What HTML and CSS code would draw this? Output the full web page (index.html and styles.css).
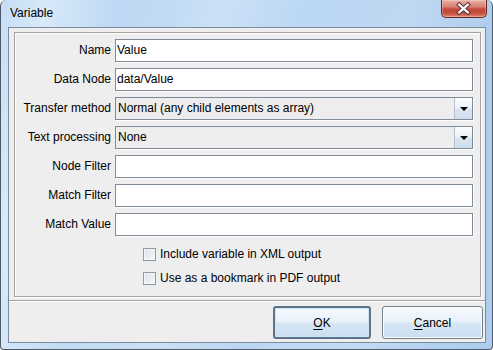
FILE: index.html
```html
<!DOCTYPE html>
<html>
<head>
<meta charset="utf-8">
<link rel="stylesheet" href="styles.css">
</head>
<body>
<div class="window">
  <div class="titlebar">
    <span class="title">Variable</span>
    <div class="close">
      <svg width="46" height="18" viewBox="0 0 46 18">
        <path d="M18.5 4.5 L27.5 12.5 M27.5 4.5 L18.5 12.5" stroke="#5a2a24" stroke-width="4.2" stroke-linecap="square" fill="none"/>
        <path d="M18.5 4.5 L27.5 12.5 M27.5 4.5 L18.5 12.5" stroke="#ffffff" stroke-width="2.2" stroke-linecap="square" fill="none"/>
      </svg>
    </div>
  </div>
  <div class="client">
    <div class="panel">
      <div class="form">
        <span class="lbl">Name</span><div class="field">Value</div>
        <span class="lbl">Data Node</span><div class="field">data/Value</div>
        <span class="lbl">Transfer method</span>
        <div class="combo"><span class="combo-text">Normal (any child elements as array)</span><span class="combo-btn"><svg width="8" height="4" viewBox="0 0 8 4"><path d="M0 0 H8 L4 4 Z" fill="#000"/></svg></span></div>
        <span class="lbl">Text processing</span>
        <div class="combo"><span class="combo-text">None</span><span class="combo-btn"><svg width="8" height="4" viewBox="0 0 8 4"><path d="M0 0 H8 L4 4 Z" fill="#000"/></svg></span></div>
        <span class="lbl">Node Filter</span><div class="field"></div>
        <span class="lbl">Match Filter</span><div class="field"></div>
        <span class="lbl">Match Value</span><div class="field"></div>
      </div>
      <div class="checks">
        <div class="check"><span class="box"></span><span class="ctext">Include variable in XML output</span></div>
        <div class="check"><span class="box"></span><span class="ctext">Use as a bookmark in PDF output</span></div>
      </div>
    </div>
    <div class="buttons">
      <div class="btn btn-ok"><span><u>O</u>K</span></div>
      <div class="btn btn-cancel"><span><u>C</u>ancel</span></div>
    </div>
  </div>
</div>
</body>
</html>
```

FILE: styles.css
```css
html, body {
  margin: 0;
  padding: 0;
  width: 493px;
  height: 350px;
  overflow: hidden;
  background: #ffffff;
}

.window {
  width: 493px;
  height: 350px;
  box-sizing: border-box;
  display: flex;
  flex-direction: column;
  border-left: 1px solid #4d5b69;
  border-right: 1px solid #4d5b69;
  border-bottom: 1px solid #4d5b69;
  border-radius: 6px 6px 4px 4px;
  background:
    linear-gradient(100deg, rgba(255,255,255,0) 0%, rgba(255,255,255,0.35) 8%, rgba(255,255,255,0) 22%, rgba(255,255,255,0.25) 40%, rgba(255,255,255,0) 55%, rgba(255,255,255,0.15) 75%, rgba(255,255,255,0) 90%),
    linear-gradient(to right, #c6def6 0%, #b9d6f3 35%, #bcd8f4 60%, #aecdee 100%);
  font-family: "Liberation Sans", Arial, sans-serif;
  font-size: 12px;
  color: #000;
}

.titlebar {
  height: 27px;
  flex: none;
  display: flex;
  align-items: flex-start;
  padding-left: 9px;
  padding-right: 5px;
}

.title {
  line-height: 27px;
  font-size: 12px;
  color: #000;
}

.close {
  margin-left: auto;
  width: 46px;
  height: 18px;
  box-sizing: border-box;
  border: 1px solid #6a2a22;
  border-top: none;
  border-radius: 0 0 5px 5px;
  background: linear-gradient(#e8b0a6 0%, #d8806f 40%, #c2463a 55%, #c4503f 78%, #de8a78 100%);
  box-shadow: inset 0 0 0 1px rgba(255,255,255,0.25);
  display: flex;
}

.close svg {
  margin-left: -1px;
}

.client {
  flex: 1;
  margin: 0 6px 6px 7px;
  border: 1px solid #7d8c9b;
  background: #eeeeee;
  display: flex;
  flex-direction: column;
}

.panel {
  margin: 4px 4px 3px 5px;
  height: 265px;
  box-sizing: border-box;
  border: 1px solid #a3a3a3;
  box-shadow: inset 1px 1px 0 #ffffff, 1px 1px 0 #ffffff;
}

.form {
  display: grid;
  grid-template-columns: 96px 1fr;
  column-gap: 4px;
  row-gap: 6px;
  padding: 6px 7px 0 0;
}

.lbl {
  text-align: right;
  line-height: 23px;
  white-space: nowrap;
}

.field {
  height: 23px;
  box-sizing: border-box;
  border: 1px solid #7f8d9b;
  background: #ffffff;
  box-shadow: 1px 1px 0 #ffffff;
  line-height: 21px;
  padding-left: 1px;
  white-space: nowrap;
}

.combo {
  height: 23px;
  box-sizing: border-box;
  border: 1px solid #7f8d9b;
  background: #ededed;
  box-shadow: 1px 1px 0 #ffffff;
  display: flex;
}

.combo-text {
  flex: 1;
  line-height: 21px;
  padding-left: 2px;
  white-space: nowrap;
  overflow: hidden;
  border-right: 1px solid #b4c0cb;
}

.combo-btn {
  width: 17px;
  flex: none;
  display: flex;
  align-items: center;
  justify-content: center;
  background: linear-gradient(#fbfcfd 0%, #eef3f8 45%, #dae5f0 55%, #cfdeec 100%);
}

.combo-btn svg {
  margin-top: 1px;
}

.checks {
  display: flex;
  flex-direction: column;
  gap: 11px;
  margin-top: 12px;
  padding-left: 128px;
}

.check {
  display: flex;
  align-items: center;
  height: 13px;
}

.box {
  width: 13px;
  height: 13px;
  box-sizing: border-box;
  border: 1px solid #8e9aa6;
  background: linear-gradient(135deg, #d7e0ea 0%, #e8edf2 50%, #fafbfc 100%);
  box-shadow: inset 0 0 0 1px #f4f6f8;
  flex: none;
}

.ctext {
  margin-left: 4px;
  line-height: 13px;
  white-space: nowrap;
}

.buttons {
  flex: 1;
  border-top: 1px solid #a3a3a3;
  box-shadow: inset 0 1px 0 #ffffff;
  display: flex;
  justify-content: flex-end;
  align-items: flex-start;
  gap: 11px;
  padding: 5px 2px 0 0;
}

.btn {
  height: 33px;
  box-sizing: border-box;
  border: 1px solid #707d8a;
  border-radius: 3px;
  background: linear-gradient(#f5f9fd 0%, #e8f1fa 48%, #d7e6f5 52%, #cbdff2 100%);
  box-shadow: inset 0 0 0 1px #fbfdff;
  display: flex;
  align-items: center;
  justify-content: center;
  font-size: 12px;
}

.btn-ok {
  width: 98px;
  border: 2px solid #5d7389;
  box-shadow: inset 0 0 0 1px #cfe6f7;
}

.btn-cancel {
  width: 101px;
}

.btn u {
  text-decoration: underline;
  text-underline-offset: 2px;
}
```
